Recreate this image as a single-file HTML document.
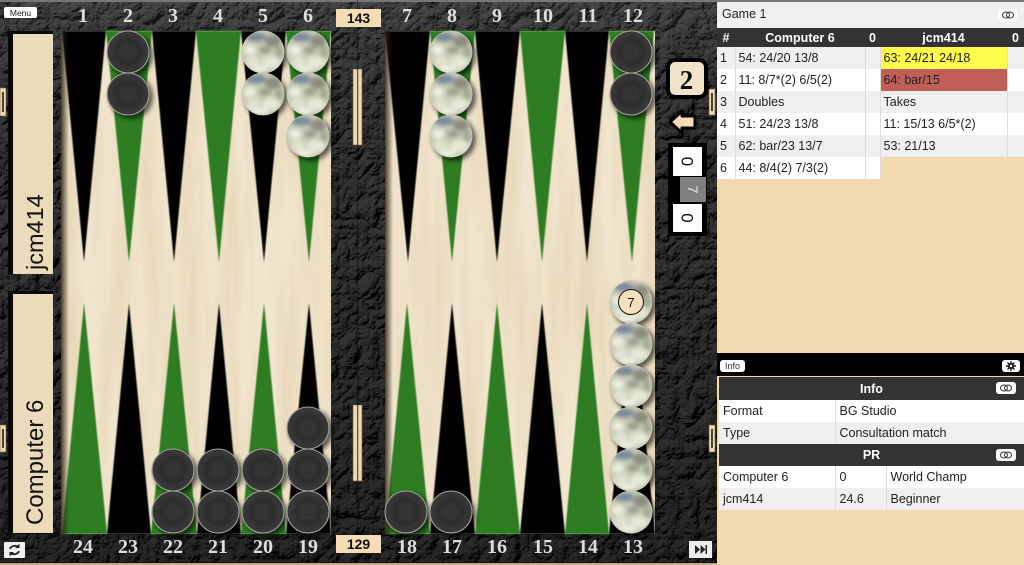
<!DOCTYPE html>
<html><head><meta charset="utf-8">
<style>
html,body{margin:0;padding:0;background:#000;}
#w{position:relative;width:1024px;height:565px;overflow:hidden;font-family:"Liberation Sans",sans-serif;}
svg{position:absolute;left:0;top:0}
.p{position:absolute;left:717px;width:307px;background:#f3d9b0;}
table{border-collapse:collapse;table-layout:fixed;position:absolute;font-size:12.5px;color:#222;}
td{padding:0 0 0 3px;height:22px;box-sizing:border-box;white-space:nowrap;overflow:hidden;border-right:1px solid #ddd;}
tr.a td{background:#efefef}
tr.b td{background:#fff}
tr.h td{background:#333;color:#fff;font-weight:bold;text-align:center;height:19px;padding:0;border:0}
.info td{padding-left:4px}
.btn{position:absolute;background:#fff;border-radius:3px;color:#333;text-align:center;font-size:9px;}
</style></head><body>
<div id="w">
<svg width="717" height="565" viewBox="0 0 717 565" xmlns="http://www.w3.org/2000/svg">
<defs>
<filter id="leather" x="0" y="0" width="100%" height="100%">
<feTurbulence type="turbulence" baseFrequency="0.05" numOctaves="4" seed="7" result="n"/>
<feDiffuseLighting in="n" surfaceScale="3.500" diffuseConstant="0.9" lighting-color="#5a5a5a" result="l"><feDistantLight azimuth="235" elevation="52"/></feDiffuseLighting>
<feComponentTransfer in="l"><feFuncR type="linear" slope="0.750" intercept="-0.025"/><feFuncG type="linear" slope="0.750" intercept="-0.025"/><feFuncB type="linear" slope="0.750" intercept="-0.025"/></feComponentTransfer>
</filter>
<linearGradient id="lg" x1="0" y1="0" x2="0" y2="1"><stop offset="0" stop-color="#fff" stop-opacity=".09"/><stop offset=".35" stop-color="#000" stop-opacity="0"/><stop offset="1" stop-color="#000" stop-opacity=".25"/></linearGradient>
<linearGradient id="edge" x1="0" y1="0" x2="1" y2="0"><stop offset="0" stop-color="#2a2012" stop-opacity=".85"/><stop offset="1" stop-color="#2a2012" stop-opacity="0"/></linearGradient>
<filter id="wood" x="0" y="0" width="100%" height="100%" color-interpolation-filters="sRGB">
<feTurbulence type="fractalNoise" baseFrequency="0.05 0.005" numOctaves="3" seed="4"/>
<feColorMatrix values="0 0 0 0 0.84  0 0 0 0 0.74  0 0 0 0 0.56  0.700 0 0 0 -0.230"/>
</filter>
<filter id="b1" x="-5%" y="-5%" width="110%" height="110%"><feGaussianBlur stdDeviation="0.6"/></filter>
<filter id="b3"><feGaussianBlur stdDeviation="2"/></filter>
<filter id="sh" x="-40%" y="-40%" width="180%" height="180%"><feGaussianBlur stdDeviation="2.500"/></filter>
<radialGradient id="dk" cx="50%" cy="50%" r="50%"><stop offset="0" stop-color="#343435"/><stop offset=".6" stop-color="#303031"/><stop offset="1" stop-color="#3a3a3b"/></radialGradient>
<clipPath id="cc"><circle cx="0" cy="0" r="21"/></clipPath>
<g id="D">
<circle cx="3" cy="3" r="22" fill="#000" opacity=".6" filter="url(#sh)"/>
<circle r="21" fill="url(#dk)" stroke="#a3a39a" stroke-width="1.100"/>
<circle r="12" fill="none" stroke="#2b2b2c" stroke-width="1"/><circle r="6" fill="none" stroke="#39393a" stroke-width="1"/>
</g>
<g id="L">
<circle cx="3" cy="3" r="22" fill="#000" opacity=".6" filter="url(#sh)"/>
<circle r="21.500" fill="#c6cab6"/>
<g clip-path="url(#cc)"><g filter="url(#b3)">
<ellipse cx="-7" cy="-15" rx="10" ry="4.500" fill="#7a8798"/>
<ellipse cx="10" cy="-11" rx="8" ry="6" fill="#8c8c7f"/>
<ellipse cx="-13" cy="-2" rx="6" ry="5" fill="#eef0e0"/>
<ellipse cx="-10" cy="10" rx="7" ry="6" fill="#dfe3cf"/>
<ellipse cx="8" cy="10" rx="9" ry="6" fill="#e6e9d6"/>
<ellipse cx="2" cy="-2" rx="6" ry="3.500" fill="#9b9c8b"/>
<ellipse cx="-3" cy="17" rx="8" ry="3" fill="#f2f3e5"/>
<ellipse cx="16" cy="0" rx="4" ry="6" fill="#a3a68f"/>
</g></g>
</g>
</defs>
<rect width="717" height="565" fill="#2a2a2a"/>
<rect width="717" height="565" filter="url(#leather)"/>
<rect width="717" height="565" fill="url(#lg)"/>
<rect x="0" y="0" width="717" height="2" fill="#777"/>
<rect x="0" y="562" width="717" height="1" fill="#111"/>
<rect x="0" y="563" width="717" height="2" fill="#bba98a"/>

<!-- side panels -->
<rect x="8" y="31" width="45" height="243" fill="#0a0a0a"/>
<rect x="8" y="291" width="45" height="243" fill="#0a0a0a"/>
<rect x="13" y="34" width="40" height="240" fill="#ecdbba"/>
<rect x="13" y="294" width="40" height="239" fill="#ecdbba"/>

<!-- fields -->
<rect x="61" y="31" width="270" height="503" fill="#f0e5cd"/>
<rect x="61" y="31" width="270" height="503" filter="url(#wood)"/>
<rect x="385" y="31" width="270" height="503" fill="#f0e5cd"/>
<rect x="385" y="31" width="270" height="503" filter="url(#wood)"/>
<g filter="url(#b1)">
<g fill="#000">
<polygon points="62,31 106,31 84,262"/><polygon points="152,31 196,31 174,262"/><polygon points="241,31 286,31 264,262"/>
<polygon points="107,534 151,534 129,303"/><polygon points="197,534 241,534 219,303"/><polygon points="286,534 331,534 309,303"/>
<polygon points="385,31 430,31 408,262"/><polygon points="475,31 520,31 497,262"/><polygon points="565,31 609,31 587,262"/>
<polygon points="430,534 475,534 452,303"/><polygon points="520,534 565,534 542,303"/><polygon points="609,534 655,534 632,303"/>
</g>
<g fill="#2f7d20">
<polygon points="106,31 152,31 129,262"/><polygon points="196,31 241,31 219,262"/><polygon points="286,31 331,31 309,262"/>
<polygon points="62,534 107,534 84,303"/><polygon points="151,534 197,534 174,303"/><polygon points="241,534 286,534 264,303"/>
<polygon points="430,31 475,31 452,262"/><polygon points="520,31 565,31 542,262"/><polygon points="609,31 654,31 632,262"/>
<polygon points="385,534 430,534 407,303"/><polygon points="475,534 520,534 497,303"/><polygon points="565,534 609,534 587,303"/>
</g>
</g>
<rect x="61" y="31" width="8" height="503" fill="url(#edge)"/>
<rect x="385" y="31" width="8" height="503" fill="url(#edge)"/>

<!-- bar hinges -->
<g fill="#ecd9ae" stroke="#6d6148" stroke-width=".6">
<rect x="353" y="69" width="5" height="76"/><rect x="358" y="69" width="4" height="76"/>
<rect x="353" y="405" width="5" height="76"/><rect x="358" y="405" width="4" height="76"/>
<rect x="0" y="88" width="6" height="28"/><rect x="0" y="425" width="6" height="27"/>
<rect x="709" y="89" width="6" height="26"/><rect x="709" y="425" width="6" height="27"/>
</g>
<g fill="#4a4232">
<rect x="2" y="92" width="2" height="20"/><rect x="2" y="429" width="2" height="19"/>
<rect x="711" y="93" width="2" height="18"/><rect x="711" y="429" width="2" height="19"/>
</g>
<line x1="357.500" y1="0" x2="357.500" y2="562" stroke="#111" stroke-width="1" opacity=".55"/>

<!-- pip boxes -->
<rect x="336" y="9" width="45" height="18" fill="#f4dcb6"/>
<rect x="336" y="535" width="45" height="18" fill="#f4dcb6"/>
<g font-family="'Liberation Sans',sans-serif" font-weight="bold" font-size="14" fill="#111" text-anchor="middle">
<text x="358.500" y="23">143</text><text x="358.500" y="549">129</text>
</g>

<!-- point numbers -->
<g font-family="'Liberation Serif',serif" font-weight="bold" font-size="20" fill="#dedede" text-anchor="middle">
<text x="83" y="22">1</text><text x="128" y="22">2</text><text x="173" y="22">3</text><text x="218" y="22">4</text><text x="263" y="22">5</text><text x="308" y="22">6</text>
<text x="407" y="22">7</text><text x="452" y="22">8</text><text x="497" y="22">9</text><text x="543" y="22">10</text><text x="588" y="22">11</text><text x="633" y="22">12</text>
<text x="83" y="553">24</text><text x="128" y="553">23</text><text x="173" y="553">22</text><text x="218" y="553">21</text><text x="263" y="553">20</text><text x="308" y="553">19</text>
<text x="407" y="553">18</text><text x="452" y="553">17</text><text x="497" y="553">16</text><text x="543" y="553">15</text><text x="588" y="553">14</text><text x="633" y="553">13</text>
</g>

<!-- checkers -->
<use href="#D" x="128" y="52"/><use href="#D" x="128" y="94"/>
<use href="#L" x="263" y="52"/><use href="#L" x="263" y="94"/>
<use href="#L" x="308" y="52"/><use href="#L" x="308" y="94"/><use href="#L" x="308" y="136"/>
<use href="#L" x="451" y="52"/><use href="#L" x="451" y="94"/><use href="#L" x="451" y="136"/>
<use href="#D" x="631" y="52"/><use href="#D" x="631" y="94"/>
<use href="#D" x="308" y="428"/><use href="#D" x="173" y="470"/><use href="#D" x="218" y="470"/><use href="#D" x="263" y="470"/><use href="#D" x="308" y="470"/>
<use href="#D" x="173" y="512"/><use href="#D" x="218" y="512"/><use href="#D" x="263" y="512"/><use href="#D" x="308" y="512"/>
<use href="#D" x="406" y="512"/><use href="#D" x="451" y="512"/>
<use href="#L" x="631" y="302"/><use href="#L" x="631" y="344"/><use href="#L" x="631" y="386"/><use href="#L" x="631" y="428"/><use href="#L" x="631" y="470"/><use href="#L" x="631" y="512"/>
<circle cx="631" cy="302" r="12.500" fill="#f5dfbd" stroke="#111" stroke-width="1"/>
<text x="631" y="307" font-family="'Liberation Sans',sans-serif" font-size="13" fill="#111" text-anchor="middle">7</text>

<!-- player names -->
<text transform="translate(43,270) rotate(-90)" font-family="'Liberation Sans',sans-serif" font-size="23.500" fill="#111">jcm414</text>
<text transform="translate(43,525) rotate(-90)" font-family="'Liberation Sans',sans-serif" font-size="24" fill="#111">Computer 6</text>

<!-- cube -->
<rect x="668" y="60" width="38" height="37" rx="7" fill="#f0e3c8" stroke="#000" stroke-width="4"/>
<text x="686.500" y="89" font-family="'Liberation Serif',serif" font-weight="bold" font-size="27" fill="#111" text-anchor="middle">2</text>
<!-- arrow -->
<polygon points="670,122 682,111 682,116 695,116 695,128 682,128 682,133" fill="#f3dbb6" stroke="#000" stroke-width="3" stroke-linejoin="round"/>
<!-- score -->
<rect x="668" y="143" width="39" height="93" fill="#000"/>
<rect x="673" y="147" width="29" height="29" fill="#fff"/>
<rect x="680" y="177" width="26" height="25" fill="#808080"/>
<rect x="673" y="204" width="29" height="28" fill="#fff"/>
<g font-family="'Liberation Sans',sans-serif" font-size="17" text-anchor="middle">
<text transform="translate(687.500,161.500) rotate(90)" fill="#111" y="6">0</text>
<text transform="translate(687.500,218) rotate(90)" fill="#111" y="6">0</text>
<text transform="translate(693,189.500) rotate(90)" fill="#e8e8e8" font-size="14" y="5">7</text>
</g>

<!-- buttons -->
<rect x="4" y="7" width="33" height="11" rx="2" fill="#fff"/>
<text x="20.500" y="16" font-family="'Liberation Sans',sans-serif" font-size="8.500" fill="#222" text-anchor="middle">Menu</text>
<rect x="4" y="542" width="21" height="16" rx="1" fill="#f1f1f1"/>
<g fill="none" stroke="#222" stroke-width="1.800">
<path d="M10 549a5 4 0 0 1 8.500-2"/><path d="M19 551a5 4 0 0 1-8.500 2"/>
</g>
<path d="M19.500 543.500v4.500h-4.500zM9.500 556.500v-4.500h4.500z" fill="#222"/>
<rect x="689" y="541" width="23" height="17" fill="#ececec"/>
<path d="M695 545l5 4.500-5 4.500zM700.500 545l5 4.500-5 4.500z" fill="#222"/><rect x="705.500" y="545" width="1.500" height="9" fill="#222"/>
</svg>

<!-- Game panel -->
<div class="p" style="top:0;height:353px;border-top:2px solid #777;box-sizing:border-box">
<div style="position:absolute;left:0;top:0;width:307px;height:26px;background:#f0f0f0;font-size:12.500px;color:#222;line-height:24px;text-indent:5px;">Game 1</div>
<div class="btn" style="left:281px;top:7px;width:19px;height:12px;"></div>
<svg style="left:284px;top:9px" width="14" height="8"><ellipse cx="5" cy="4" rx="3.500" ry="3" fill="none" stroke="#333"/><ellipse cx="9" cy="4" rx="3.500" ry="3" fill="none" stroke="#333"/></svg>
<table style="left:0;top:26px;width:307px">
<colgroup><col style="width:18px"><col style="width:130px"><col style="width:15px"><col style="width:127px"><col style="width:17px"></colgroup>
<tr class="h"><td>#</td><td>Computer 6</td><td>0</td><td>jcm414</td><td>0</td></tr>
<tr class="a"><td>1</td><td>54: 24/20 13/8</td><td></td><td style="background:#fdfd4e">63: 24/21 24/18</td><td></td></tr>
<tr class="b"><td>2</td><td>11: 8/7*(2) 6/5(2)</td><td></td><td style="background:#bf5f58">64: bar/15</td><td></td></tr>
<tr class="a"><td>3</td><td>Doubles</td><td></td><td>Takes</td><td></td></tr>
<tr class="b"><td>4</td><td>51: 24/23 13/8</td><td></td><td>11: 15/13 6/5*(2)</td><td></td></tr>
<tr class="a"><td>5</td><td>62: bar/23 13/7</td><td></td><td>53: 21/13</td><td></td></tr>
<tr class="b"><td>6</td><td>44: 8/4(2) 7/3(2)</td><td></td><td style="background:#f3d9b0;border:0"></td><td style="background:#f3d9b0;border:0"></td></tr>
</table>
</div>

<!-- strip -->
<div style="position:absolute;left:717px;top:353px;width:307px;height:23px;background:#000"></div>
<div class="btn" style="left:720px;top:360px;width:25px;height:12px;line-height:12px;">Info</div>
<div class="btn" style="left:1002px;top:360px;width:18px;height:12px;"></div>
<svg style="left:1006px;top:361px" width="10" height="10"><circle cx="5" cy="5" r="2.200" fill="none" stroke="#222" stroke-width="2"/><path d="M5 0v2M5 8v2M0 5h2M8 5h2M1.500 1.500l1.500 1.500M7 7l1.500 1.500M8.500 1.500L7 3M3 7L1.500 8.500" stroke="#222" stroke-width="1.400"/></svg>

<!-- Info panel -->
<div class="p" style="top:376px;height:189px;">
<table class="info" style="left:2px;top:1px;width:305px">
<colgroup><col style="width:116px"><col style="width:51px"><col style="width:138px"></colgroup>
<tr class="h"><td colspan="3" style="height:23px">Info</td></tr>
<tr class="b"><td>Format</td><td colspan="2">BG Studio</td></tr>
<tr class="a"><td>Type</td><td colspan="2">Consultation match</td></tr>
<tr class="h"><td colspan="3" style="height:22px">PR</td></tr>
<tr class="b"><td>Computer 6</td><td>0</td><td>World Champ</td></tr>
<tr class="a"><td>jcm414</td><td>24.6</td><td>Beginner</td></tr>
</table>
</div>
<div class="btn" style="left:996px;top:382px;width:20px;height:12px;"></div>
<svg style="left:999px;top:384px" width="14" height="8"><ellipse cx="5" cy="4" rx="3.500" ry="3" fill="none" stroke="#333"/><ellipse cx="9" cy="4" rx="3.500" ry="3" fill="none" stroke="#333"/></svg>
<div class="btn" style="left:996px;top:449px;width:20px;height:12px;"></div>
<svg style="left:999px;top:451px" width="14" height="8"><ellipse cx="5" cy="4" rx="3.500" ry="3" fill="none" stroke="#333"/><ellipse cx="9" cy="4" rx="3.500" ry="3" fill="none" stroke="#333"/></svg>
</div>
</body></html>
